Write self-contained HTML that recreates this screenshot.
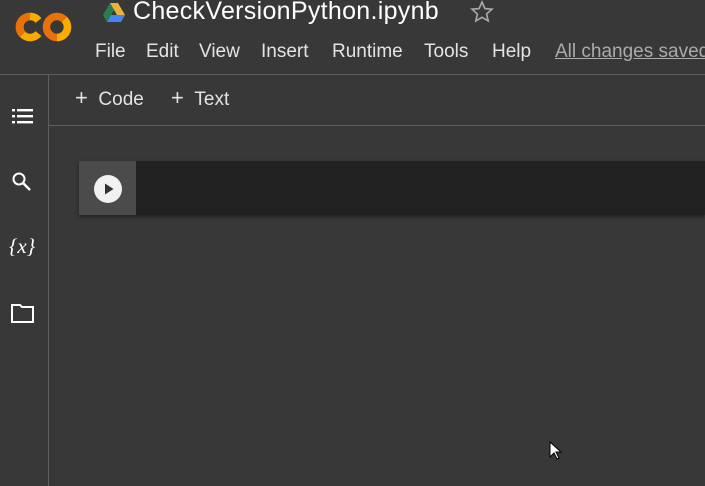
<!DOCTYPE html>
<html><head><style>
*{margin:0;padding:0;box-sizing:border-box}
body{width:705px;height:486px;background:#383838;font-family:"Liberation Sans",Arial,sans-serif;position:relative;overflow:hidden;color:#e3e3e3}
.a{position:absolute}
.menu span{position:absolute;top:0;font-size:19px;color:#e3e3e3;white-space:nowrap}
</style></head><body>
<svg class="a" style="left:14px;top:10px" width="60" height="34" viewBox="0 0 60 34">
<path d="M24.5 10.5 A10.5 10.5 0 1 0 24.5 23.5" fill="none" stroke="#f9ab00" stroke-width="7.5"/>
<path d="M16 6.5 A10.5 10.5 0 0 0 8.5 24.5" fill="none" stroke="#e8710a" stroke-width="7.5"/>
<circle cx="43" cy="17" r="10.5" fill="none" stroke="#e8710a" stroke-width="7.5"/>
<path d="M43 27.5 A10.5 10.5 0 0 0 50.4 9.6" fill="none" stroke="#f9ab00" stroke-width="7.5"/>
</svg>
<svg class="a" style="left:103px;top:3px" width="22" height="19" viewBox="0 0 22 19">
<path d="M7 0h8l7 12h-8z" fill="#e8b33a"/><path d="M7 0l-7 12 4 7 7-12z" fill="#2a7d4b"/><path d="M4 19h14l4-7H8z" fill="#4286f4"/>
</svg>
<div class="a" style="left:133px;top:-3px;font-size:25px;letter-spacing:0.3px;color:#fff">CheckVersionPython.ipynb</div>
<svg class="a" style="left:470px;top:0" width="24" height="24" viewBox="0 0 24 24"><path d="M12 2l2.9 6.6 7.1.6-5.4 4.7 1.6 7L12 17.3 5.8 21l1.6-7L2 9.2l7.1-.6z" fill="none" stroke="#aaa" stroke-width="1.6"/></svg>
<div class="menu a" style="left:0;top:41px;width:705px;height:24px">
<span style="left:95px">File</span><span style="left:146px">Edit</span><span style="left:199px">View</span><span style="left:261px">Insert</span><span style="left:332px">Runtime</span><span style="left:424px">Tools</span><span style="left:492px">Help</span><span style="left:555px;color:#aaa;text-decoration:underline">All changes saved</span>
</div>
<div class="a" style="left:0;top:74px;width:705px;height:1px;background:#5f5f5f"></div>
<div class="a" style="left:48px;top:75px;width:1px;height:411px;background:#5f5f5f"></div>
<div class="a" style="left:49px;top:125px;width:656px;height:1px;background:#5f5f5f"></div>
<div class="a" style="left:75px;top:88px;font-size:19px;color:#e3e3e3;white-space:nowrap"><span style="font-size:22px;line-height:19px">+</span>&nbsp;&nbsp;Code</div>
<div class="a" style="left:171px;top:88px;font-size:19px;color:#e3e3e3;white-space:nowrap"><span style="font-size:22px;line-height:19px">+</span>&nbsp;&nbsp;Text</div>
<svg class="a" style="left:11px;top:107px" width="24" height="20" viewBox="0 0 24 20" fill="#fff">
<rect x="1" y="2" width="3" height="2.4"/><rect x="6" y="2" width="16" height="2.4"/><rect x="1" y="8" width="3" height="2.4"/><rect x="6" y="8" width="16" height="2.4"/><rect x="1" y="14" width="3" height="2.4"/><rect x="6" y="14" width="16" height="2.4"/></svg>
<svg class="a" style="left:11px;top:171px" width="22" height="22" viewBox="0 0 22 22"><circle cx="8" cy="8" r="5.5" fill="none" stroke="#fff" stroke-width="2"/><path d="M12 12l7 7" stroke="#fff" stroke-width="2.4"/></svg>
<div class="a" style="left:9px;top:234px;font-family:'Liberation Serif',serif;font-size:21px;font-style:italic;color:#fff">{<span>x</span>}</div>
<svg class="a" style="left:11px;top:303px" width="24" height="20" viewBox="0 0 24 20"><path d="M1 2h8l2 2h11v15H1z" fill="none" stroke="#fff" stroke-width="2"/></svg>
<div class="a" style="left:79px;top:161px;width:626px;height:54px;background:#212121;box-shadow:0 2px 4px rgba(0,0,0,.4)"></div>
<div class="a" style="left:79px;top:161px;width:57px;height:54px;background:#4b4b4b"></div>
<div class="a" style="left:94px;top:175px;width:28px;height:28px;border-radius:50%;background:#f1f1f1"></div>
<svg class="a" style="left:94px;top:175px" width="28" height="28" viewBox="0 0 28 28"><path d="M11 8.5v11l8.5-5.5z" fill="#333"/></svg>
<svg class="a" style="left:549px;top:441px" width="14" height="20" viewBox="0 0 14 20"><path d="M1 1v15l4-4 3 6 2-1-3-6h5z" fill="#fff" stroke="#000" stroke-width="1"/></svg>
</body></html>
